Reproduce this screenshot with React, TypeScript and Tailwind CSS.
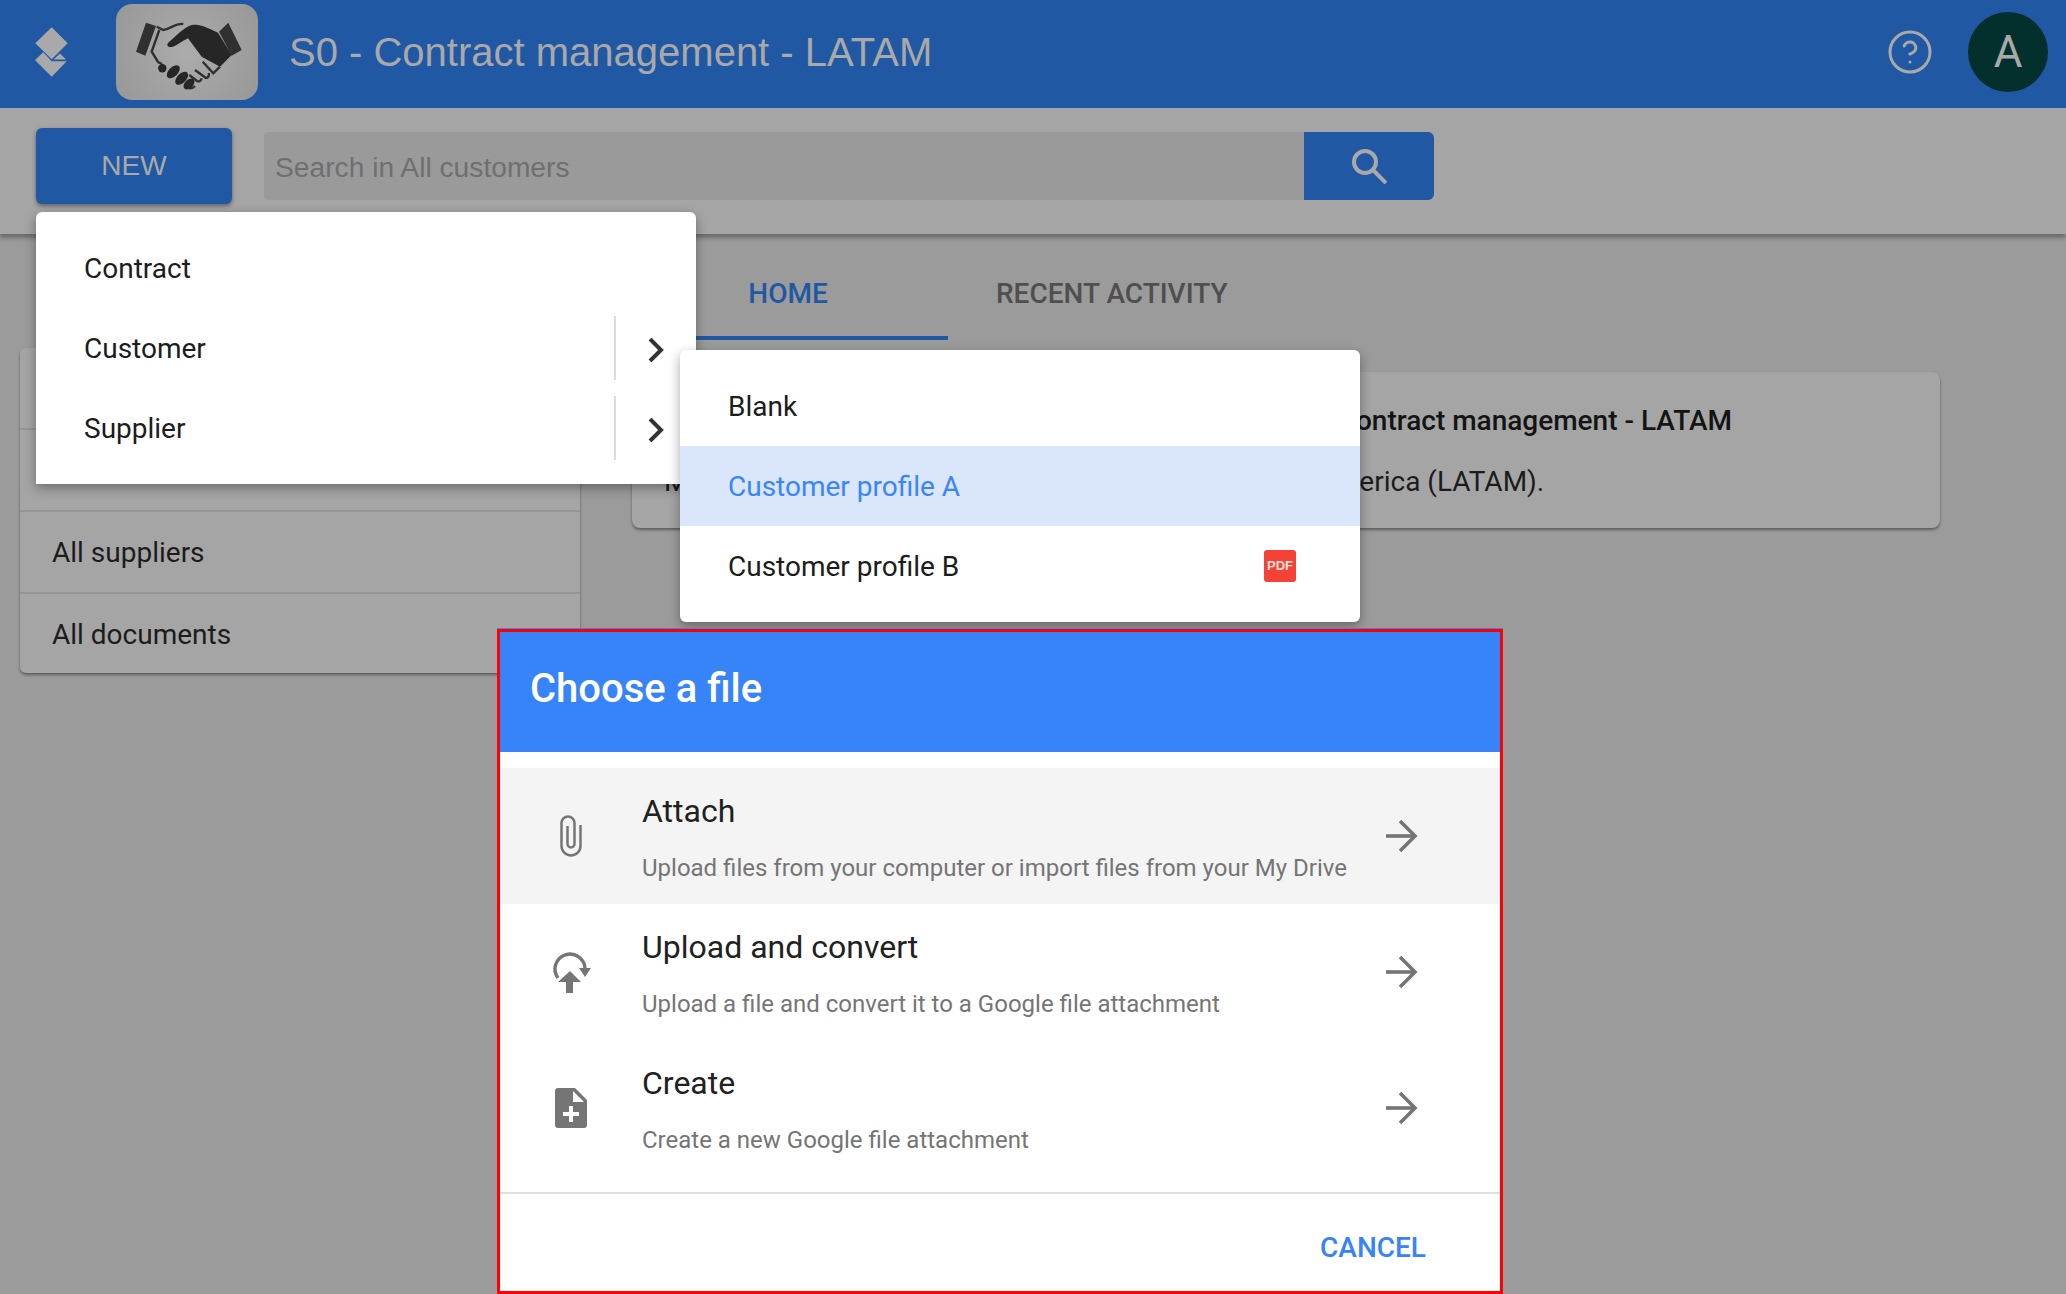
import { CircleHelp } from "lucide-react"

const sidebarItems = ["All contracts", "All customers", "All suppliers", "All documents"]

const fileOptions = [
  { title: "Attach", desc: "Upload files from your computer or import files from your My Drive", icon: <PaperclipIcon />, hover: true },
  { title: "Upload and convert", desc: "Upload a file and convert it to a Google file attachment", icon: <UploadIcon />, hover: false },
  { title: "Create", desc: "Create a new Google file attachment", icon: <NoteAddIcon />, hover: false },
]

function AppLogo() {
  return (
    <svg width="34" height="50" viewBox="35 27 34 50" fill="#a9a9a9">
      <polygon points="51.7,27.3 67.7,43.3 51.7,59.3 35.3,43.3" />
      <polygon points="35,60 43.3,52.3 51.7,61.3 66.7,61.3 51.7,76.7" />
      <polygon points="53.5,59.5 60,53.5 66,59.5" />
    </svg>
  )
}

function HandshakeIcon() {
  return (
    <svg width="142" height="96" viewBox="116 4 142 96">
      <polygon points="146,22.7 156,26 145.3,55.7 136,51.7" fill="#303030" />
      <polygon points="228.3,22.7 241.7,50 231.7,55.7 219,31.7" fill="#303030" />
      <path d="M168 43 C175 37 184 27 192 25 C198 24 204 26 218 32.7 L231.7 55 L220 66.7 L201.7 56.7 L188 38.3 C182 41 178 45 173 46.7 C169 48 166 46 168 43 Z" fill="#262626" />
      <path d="M156.7 26.7 L163.3 30 C170 29 176 23 183.3 24 M159.3 30 L151.7 51.7 L158 62 L162 64" fill="none" stroke="#303030" strokeWidth="2.4" />
      <path d="M220 66.7 L213.3 73.3 L202.7 61.7 M209 73 C209 76 208 78 206 78 L195 70 M201.7 78.3 C201 81 199 82 197 81 L189.3 75 M195 86 C193 88 191 89 189 88" fill="none" stroke="#303030" strokeWidth="2.4" />
      <circle cx="162.3" cy="68.3" r="4.2" fill="#262626" />
      <ellipse cx="173.3" cy="71.7" rx="4.6" ry="8" fill="#262626" transform="rotate(45 173.3 71.7)" />
      <ellipse cx="181.7" cy="78.3" rx="4.6" ry="8" fill="#262626" transform="rotate(45 181.7 78.3)" />
      <ellipse cx="189" cy="84" rx="4.2" ry="6.5" fill="#262626" transform="rotate(45 189 84)" />
    </svg>
  )
}

function SearchIcon() {
  return (
    <svg width="36" height="36" viewBox="0 0 36 36" fill="none" stroke="#a9a9a9" strokeWidth="4">
      <circle cx="14" cy="14" r="11" />
      <line x1="22" y1="22" x2="35" y2="35" />
    </svg>
  )
}

function Chevron() {
  return (
    <svg width="16" height="24" viewBox="0 0 16 24" fill="none" stroke="#333333" strokeWidth="4">
      <polyline points="2,1 13,12 2,23" />
    </svg>
  )
}

function PaperclipIcon() {
  return (
    <svg width="22" height="42" viewBox="0 0 22 42" fill="none" stroke="#757575" strokeWidth="2.5">
      <path d="M20.5 10 V31 A9.5 9.5 0 0 1 1.5 31 V8 A6.5 6.5 0 0 1 14.5 8 V29 A3.5 3.5 0 0 1 7.5 29 V11" />
    </svg>
  )
}

function UploadIcon() {
  return (
    <svg width="40" height="44" viewBox="551 950 40 44">
      <path d="M558 978 A15 15 0 1 1 585 969" fill="none" stroke="#757575" strokeWidth="3.4" />
      <polygon points="579,968 591,968 585,977" fill="#757575" />
      <polygon points="570,971 581,982 573,982 573,993 566,993 566,982 558,982" fill="#757575" />
    </svg>
  )
}

function NoteAddIcon() {
  return (
    <svg width="32" height="40" viewBox="0 0 32 40">
      <path d="M3 0 H20 L32 12 V37 A3 3 0 0 1 29 40 H3 A3 3 0 0 1 0 37 V3 A3 3 0 0 1 3 0 Z" fill="#757575" />
      <polygon points="18,3 29,14 18,14" fill="#ffffff" />
      <rect x="8" y="24" width="16" height="4" fill="#ffffff" />
      <rect x="14" y="18" width="4" height="16" fill="#ffffff" />
    </svg>
  )
}

function ArrowIcon() {
  return (
    <svg width="32" height="32" viewBox="0 0 32 32" fill="none" stroke="#757575" strokeWidth="3.6">
      <line x1="0" y1="16" x2="29" y2="16" />
      <polyline points="14,1 29,16 14,31" />
    </svg>
  )
}

export default function App() {
  return (
    <div className="relative w-[2066px] h-[1294px] overflow-hidden bg-[#9b9b9b] font-['Roboto',sans-serif] text-[28px] text-[#1c1c1c]">
      {/* Header */}
      <header className="flex items-center h-[108px] pb-[4px] bg-[#2158a3]">
        <div className="ml-[35px] w-[81px]">
          <AppLogo />
        </div>
        <div className="w-[142px] h-[96px] rounded-[16px] bg-[radial-gradient(circle,#acacac,#979797)]">
          <HandshakeIcon />
        </div>
        <h1 className="ml-[31px] font-['Liberation_Sans',sans-serif] text-[40px] text-[#a9a9a9]">S0 - Contract management - LATAM</h1>
        <div className="ml-auto text-[#a9a9a9]">
          <CircleHelp size={48} strokeWidth={1.5} />
        </div>
        <div className="flex items-center justify-center w-[80px] h-[80px] mr-[18px] ml-[34px] rounded-full bg-[#03302c] text-[44px] text-[#a9a9a9]">
          A
        </div>
      </header>

      {/* Toolbar */}
      <div className="relative flex items-center h-[126px] pb-[10px] bg-[#a5a5a5] shadow-[0_4px_4px_rgba(0,0,0,0.3)] font-['Liberation_Sans',sans-serif]">
        <button className="ml-[36px] w-[196px] h-[76px] rounded-[6px] bg-[#2158a3] text-[#a9a9a9] shadow-[0_2px_4px_rgba(0,0,0,0.4)]">
          NEW
        </button>
        <div className="flex items-center ml-[32px] w-[1040px] h-[68px] pl-[11px] pt-[2px] rounded-l-[4px] bg-[#9a9a9a] text-[28.2px] text-[#6f6f6f]">
          Search in All customers
        </div>
        <div className="flex items-center justify-center w-[130px] h-[68px] rounded-r-[6px] bg-[#2158a3]">
          <SearchIcon />
        </div>
      </div>

      {/* Main */}
      <main className="flex">
        <div className="ml-[20px] mt-[114px] w-[560px] self-start rounded-[6px] bg-[#a5a5a5] shadow-[0_2px_3px_rgba(0,0,0,0.4)]">
          {sidebarItems.map((item, i) => (
            <div
              key={item}
              className={
                i < 3
                  ? "flex items-center h-[82px] pl-[32px] pt-[2px] border-b-2 border-[#959595]"
                  : "flex items-center h-[79px] pl-[32px] pt-[3px]"
              }
            >
              {item}
            </div>
          ))}
        </div>
        <div className="ml-[52px] w-[1308px]">
          <div className="flex mt-[10px] h-[96px] font-medium">
            <div className="flex items-center justify-center w-[316px] pr-[4px] pt-[7px] border-b-4 border-[#2158a3] text-[#2158a3]">
              HOME
            </div>
            <div className="flex items-center px-[48px] pt-[3px] text-[#4f4f4f]">RECENT ACTIVITY</div>
          </div>
          <div className="mt-[32px] h-[156px] pl-[32px] pt-[29px] rounded-[8px] bg-[#a5a5a5] shadow-[0_2px_3px_rgba(0,0,0,0.4)]">
            <div className="h-[40px] leading-[40px] pr-[208px] text-right font-medium text-[#141414]">S0 - Contract management - LATAM</div>
            <div className="mt-[21px] h-[40px] leading-[40px]">Manage customer and supplier contracts from Latin America (LATAM).</div>
          </div>
        </div>
      </main>

      {/* NEW menu */}
      <div className="absolute left-[36px] top-[212px] w-[660px] py-[16px] rounded-t-[6px] bg-white shadow-[0_4px_12px_rgba(0,0,0,0.35)]">
        <div className="flex items-center h-[80px] pl-[48px] pt-[2px]">Contract</div>
        {["Customer", "Supplier"].map((label) => (
          <div key={label} className="flex items-center h-[80px] pl-[48px]">
            <span className="flex-1 pt-[2px]">{label}</span>
            <div className="flex items-center justify-center w-[82px] h-[64px] pt-[3px] border-l-2 border-[#dcdcdc]">
              <Chevron />
            </div>
          </div>
        ))}
      </div>

      {/* Customer submenu */}
      <div className="absolute left-[680px] top-[350px] w-[680px] py-[16px] rounded-[6px] bg-white shadow-[0_4px_12px_rgba(0,0,0,0.35)]">
        <div className="flex items-center h-[80px] pl-[48px] pt-[2px]">Blank</div>
        <div className="flex items-center h-[80px] pl-[48px] pt-[2px] bg-[#d9e6fc] text-[#3a85f7]">Customer profile A</div>
        <div className="flex items-center h-[80px] pl-[48px]">
          <span className="flex-1 pt-[2px]">Customer profile B</span>
          <div className="flex items-center justify-center w-[32px] h-[32px] mr-[64px] rounded-[3px] bg-[#f44336] font-['Liberation_Sans',sans-serif] text-[13px] font-bold text-[#ffe0dc]">
            PDF
          </div>
        </div>
      </div>

      {/* Choose a file dialog */}
      <div className="absolute left-[497px] top-[629px] flex flex-col w-[1006px] h-[665px] border-[3px] border-[#ff0000] bg-white shadow-[0_-1px_0_#3684f8]">
        <div className="flex items-center h-[120px] pl-[30px] pb-[6px] bg-[#3684f8] text-[40px] font-medium text-white">
          Choose a file
        </div>
        <div className="py-[16px]">
          {fileOptions.map((opt) => (
            <div key={opt.title} className={opt.hover ? "flex h-[136px] bg-[#f4f4f4]" : "flex h-[136px]"}>
              <div className="flex items-center justify-center w-[142px]">{opt.icon}</div>
              <div className="flex-1 pt-[23px]">
                <div className="h-[40px] leading-[40px] text-[32px] text-[#212121]">{opt.title}</div>
                <div className="mt-[17px] h-[40px] leading-[40px] text-[24px] text-[#757575]">{opt.desc}</div>
              </div>
              <div className="flex items-center mr-[82px]">
                <ArrowIcon />
              </div>
            </div>
          ))}
        </div>
        <div className="flex items-center justify-end flex-1 pr-[74px] pt-[10px] border-t-2 border-[#e0e0e0] font-medium text-[#3684f8]">
          CANCEL
        </div>
      </div>
    </div>
  )
}
